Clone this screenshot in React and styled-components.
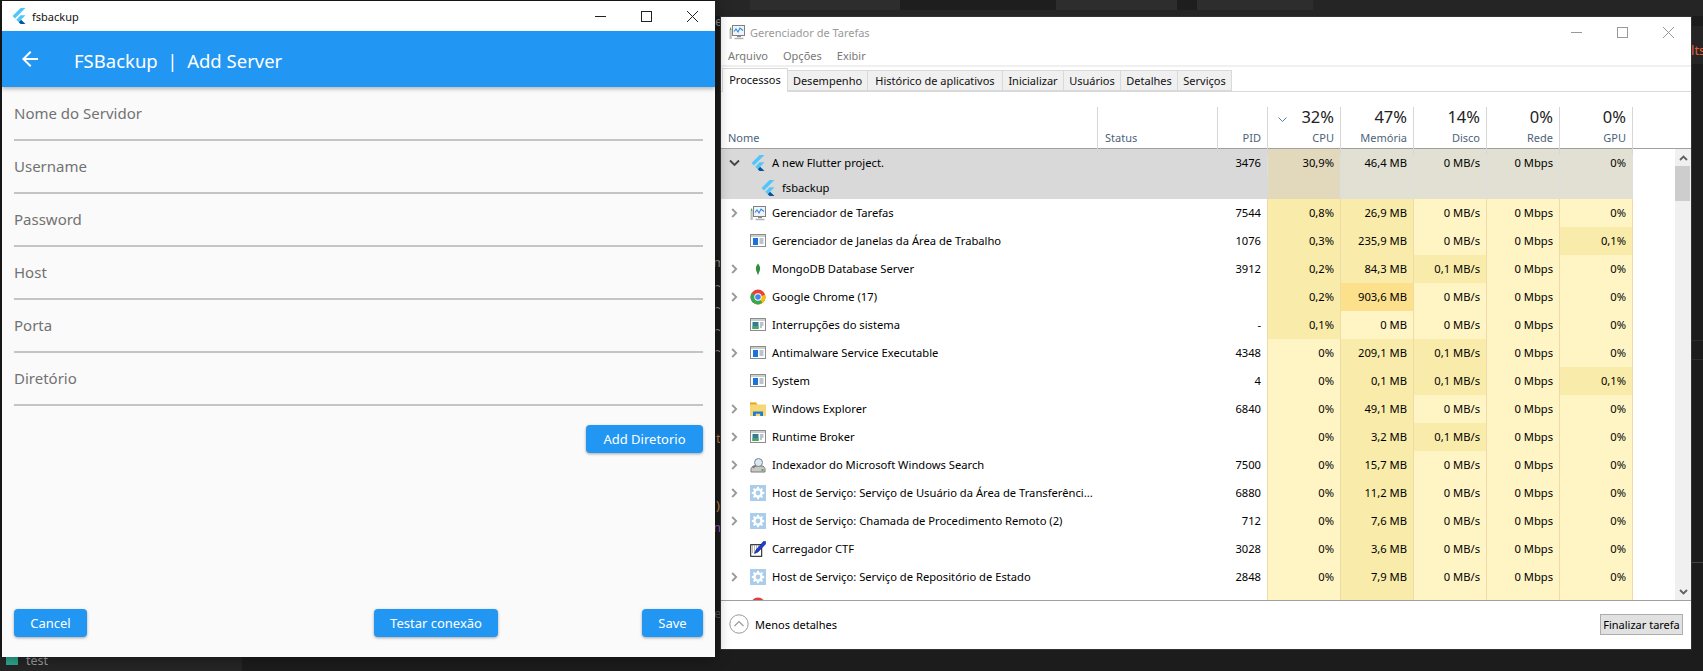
import React from 'react';
import styled, { createGlobalStyle } from 'styled-components';

const GRID = '377px 120px 50px repeat(5, 73px) 42px';
const UI_FONT = '"Noto Sans", "Open Sans", Roboto, sans-serif';

const Global = createGlobalStyle`
  html, body { margin: 0; padding: 0; height: 100%; background: #1c1c1c; overflow: hidden; }
  * { box-sizing: border-box; }
  body { font-family: ${UI_FONT}; }
`;

const Desktop = styled.div`
  position: relative;
  width: 1703px;
  height: 671px;
  overflow: hidden;
  background: #1c1c1c;
`;

/* editor peeking out behind the two windows */
const EditorTabs = styled.div`
  position: absolute;
  top: 0;
  left: 715px;
  right: 0;
  height: 16px;
  display: flex;
  background: #252526;
`;
const EditorTab = styled.div`
  height: 10px;
  width: ${(p) => p.$w}px;
  background: ${(p) => p.$bg};
`;
const Sidebar = styled.div`
  position: absolute;
  left: 0;
  bottom: 0;
  width: 242px;
  height: 14px;
  background: #252526;
  display: flex;
  align-items: flex-start;
  padding-left: 6px;
  overflow: hidden;
`;
const TestMark = styled.span`
  width: 12px;
  height: 8px;
  background: #2aa58c;
`;
const TestLabel = styled.span`
  margin: -5px 0 0 8px;
  font-size: 12.5px;
  color: #9a9a9a;
`;
const Fragment = styled.span`
  position: absolute;
  left: ${(p) => p.$x}px;
  top: ${(p) => p.$y}px;
  color: ${(p) => p.$c};
  font: 13px "Noto Sans", sans-serif;
  line-height: 14px;
`;
const EdgeBand = styled.div`
  position: absolute;
  left: 1691px;
  right: 0;
  top: ${(p) => p.$y}px;
  height: ${(p) => p.$h}px;
  background: ${(p) => p.$c};
`;

/* flutter app window */
const AppWindow = styled.div`
  position: absolute;
  left: 2px;
  top: 1px;
  width: 713px;
  height: 656px;
  z-index: 2;
  display: flex;
  flex-direction: column;
  background: #fafafa;
  box-shadow: 0 0 14px rgba(0, 0, 0, 0.45);
`;
const AppTitleBar = styled.div`
  height: 30px;
  flex: none;
  display: flex;
  align-items: center;
  background: #fff;
  padding-left: 10px;
`;
const AppTitle = styled.span`
  margin-left: 6px;
  font-size: 11px;
  color: #111;
`;
const Controls = styled.div`
  margin-left: auto;
  align-self: flex-start;
  display: flex;
  color: ${(p) => (p.$dim ? '#999' : '#222')};
`;
const ControlButton = styled.span`
  width: 46px;
  height: 30px;
  display: flex;
  align-items: center;
  justify-content: center;
`;
const AppBar = styled.header`
  height: 56px;
  flex: none;
  display: flex;
  align-items: center;
  gap: 32px;
  padding-left: 16px;
  background: #2196f3;
  color: #fff;
  box-shadow: 0 2px 4px rgba(0, 0, 0, 0.28);
  z-index: 1;
`;
const AppBarTitle = styled.h1`
  margin: 2px 0 0;
  font-size: 18.5px;
  font-weight: 400;
  white-space: pre;
`;
const Form = styled.div`
  flex: 1;
  display: flex;
  flex-direction: column;
  padding: 1px 12px 20px;
`;
const Field = styled.label`
  height: 53px;
  flex: none;
  display: flex;
  align-items: center;
  padding-bottom: 2px;
  font-size: 15px;
  color: #727272;
  border-bottom: 2px solid #c4c4c4;
`;
const ButtonRow = styled.div`
  display: flex;
  margin-top: ${(p) => p.$top};
`;
const Raised = styled.button`
  width: ${(p) => p.$w}px;
  margin-left: ${(p) => p.$offset || '0'};
  height: 28px;
  padding: 0;
  border: none;
  border-radius: 4px;
  background: #2196f3;
  color: #fff;
  font-family: inherit;
  font-size: 13px;
  box-shadow: 0 1px 3px rgba(0, 0, 0, 0.35);
`;

/* task manager window */
const TaskWindow = styled.div`
  position: absolute;
  left: 720px;
  top: 16px;
  width: 972px;
  height: 634px;
  display: flex;
  flex-direction: column;
  background: #fff;
  border: 1px solid #333;
  font-size: 11px;
  color: #000;
`;
const TaskTitleBar = styled.div`
  height: 29px;
  flex: none;
  display: flex;
  align-items: center;
  padding-left: 8px;
`;
const TaskTitle = styled.span`
  margin: 2px 0 0 5px;
  font-size: 11px;
  color: #999;
`;
const MenuBar = styled.div`
  height: 21px;
  flex: none;
  display: flex;
  gap: 15px;
  padding: 0 0 0 7px;
  align-items: center;
  color: #777;
  border-bottom: 2px solid #f0f0f0;
`;
const TabStrip = styled.div`
  height: 25px;
  flex: none;
  display: flex;
  align-items: flex-end;
  padding-left: 1px;
  border-bottom: 1px solid #d9d9d9;
`;
const Tab = styled.div`
  width: ${(p) => p.$w}px;
  height: ${(p) => (p.$active ? 24 : 21)}px;
  margin-bottom: ${(p) => (p.$active ? -1 : 0)}px;
  padding-bottom: ${(p) => (p.$active ? 3 : 0)}px;
  display: flex;
  align-items: center;
  justify-content: center;
  background: ${(p) => (p.$active ? '#fff' : '#f0f0f0')};
  border: 1px solid #d9d9d9;
  border-left-width: ${(p) => (p.$active ? 1 : 0)}px;
  border-bottom-width: ${(p) => (p.$active ? 0 : 1)}px;
  color: #111;
  position: relative;
`;
const HeaderRow = styled.div`
  margin-top: 15px;
  height: 42px;
  flex: none;
  display: grid;
  grid-template-columns: ${GRID} 16px;
  border-bottom: 1px solid #a0a0a0;
`;
const HeaderCell = styled.div`
  position: relative;
  display: flex;
  flex-direction: column;
  justify-content: flex-end;
  align-items: ${(p) => (p.$left ? 'flex-start' : 'flex-end')};
  padding: 0 6px 9px 7px;
  color: #4d5f7a;
  border-right: ${(p) => (p.$plain ? 'none' : '1px solid #d6d6d6')};
`;
const Percent = styled.span`
  font-size: 16.5px;
  line-height: 20px;
  margin-bottom: 3px;
  color: #222;
`;
const SortMark = styled.span`
  position: absolute;
  left: 10px;
  top: 3px;
  color: #5f7ba8;
`;
const ScrollArea = styled.div`
  flex: 1;
  min-height: 0;
  display: flex;
  border-bottom: 1px solid #a0a0a0;
`;
const Rows = styled.div`
  flex: 1;
  overflow: hidden;
  font-size: 11.2px;
`;
const Scrollbar = styled.div`
  width: 16px;
  flex: none;
  display: flex;
  flex-direction: column;
  align-items: center;
  background: #f0f0f0;
  color: #606060;
`;
const ScrollStep = styled.span`
  height: 17px;
  flex: none;
  display: flex;
  align-items: center;
  justify-content: center;
`;
const Thumb = styled.span`
  width: 15px;
  margin-left: -1px;
  height: 35px;
  flex: none;
  background: #cdcdcd;
`;
const ScrollGap = styled.span`
  flex: 1;
`;
const Group = styled.div`
  display: grid;
  grid-template-columns: 547px repeat(5, 73px) 42px;
  background: #fff;
`;
const GroupNames = styled.div`
  background: #d9d9d9;
  display: flex;
  flex-direction: column;
`;
const GroupRow = styled.div`
  display: grid;
  grid-template-columns: 377px 120px 50px;
  height: ${(p) => p.$h}px;
`;
const Row = styled.div`
  height: 28px;
  display: grid;
  grid-template-columns: ${GRID};
`;
const NameCell = styled.div`
  display: flex;
  align-items: center;
  min-width: 0;
  padding-left: ${(p) => (p.$child ? 39 : 8)}px;
  padding-bottom: 1px;
  white-space: nowrap;
`;
const ChevronSlot = styled.span`
  width: 21px;
  flex: none;
  display: flex;
  padding-left: ${(p) => (p.$open ? 0 : 2)}px;
  color: ${(p) => (p.$open ? '#444' : '#999')};
`;
const IconSlot = styled.span`
  width: 16px;
  height: 16px;
  flex: none;
  margin-right: 6px;
  display: flex;
  justify-content: center;
`;
const Cell = styled.div`
  display: flex;
  align-items: center;
  justify-content: flex-end;
  padding: 0 6px 1px 0;
  white-space: nowrap;
`;
const HeatCell = styled(Cell)`
  background: ${(p) => ['#fff4c4', '#f9ecaa', '#fde08c'][p.$level]};
  border-right: 1px solid #efdba8;
`;
const PidCell = styled(Cell)`
  border-right: 1px solid ${(p) => (p.$selected ? '#d9dfe2' : '#efdba8')};
`;
const SelectedHeat = styled(Cell)`
  align-items: flex-start;
  padding-top: 6px;
  background: ${(p) => (p.$hot ? '#e2d8bc' : '#e1e0d2')};
  border-right: 1px solid #d9dfe2;
`;
const Footer = styled.div`
  height: 48px;
  flex: none;
  display: flex;
  align-items: center;
  padding: 0 8px 2px 8px;
`;
const FewerDetails = styled.span`
  display: flex;
  align-items: center;
  gap: 6px;
`;
const EndTask = styled.button`
  margin-left: auto;
  width: 83px;
  height: 21px;
  padding: 0;
  font-family: inherit;
  font-size: 11px;
  color: #000;
  background: #e1e1e1;
  border: 1px solid #adadad;
`;

const Glyph = ({ size = 16, children, viewBox = '0 0 16 16' }) => (
  <svg width={size} height={size} viewBox={viewBox} fill="none">
    {children}
  </svg>
);

const FlutterLogo = ({ width = 14, height = 16 }) => (
  <svg width={width} height={height} viewBox="2 0 20 24">
    <polygon points="14.3,0 2.3,12 6,15.7 21.7,0" fill="#54c5f8" />
    <polygon points="14.3,11 7.9,17.5 11.6,21.2 21.7,11" fill="#54c5f8" />
    <polygon points="11.6,21.2 14.3,24 21.7,24 15.2,17.5" fill="#01579b" />
  </svg>
);

const Minimize = () => (
  <svg width="11" height="11" viewBox="0 0 11 11"><path d="M0 5.5h11" stroke="currentColor" /></svg>
);
const Maximize = () => (
  <svg width="11" height="11" viewBox="0 0 11 11"><rect x=".5" y=".5" width="10" height="10" fill="none" stroke="currentColor" /></svg>
);
const CloseX = () => (
  <svg width="11" height="11" viewBox="0 0 11 11"><path d="M0 0l11 11M11 0L0 11" stroke="currentColor" /></svg>
);
const WindowControls = ({ dim }) => (
  <Controls $dim={dim}>
    <ControlButton><Minimize /></ControlButton>
    <ControlButton><Maximize /></ControlButton>
    <ControlButton><CloseX /></ControlButton>
  </Controls>
);

const ArrowBack = () => (
  <svg width="24" height="24" viewBox="0 0 24 24">
    <path fill="currentColor" d="M20 11H7.83l5.59-5.59L12 4l-8 8 8 8 1.41-1.41L7.83 13H20v-2z" />
  </svg>
);

const Chevron = ({ open }) =>
  open ? (
    <svg width="11" height="8" viewBox="0 0 11 8"><path d="M1 1.5l4.5 4.5L10 1.5" stroke="currentColor" strokeWidth="1.9" fill="none" /></svg>
  ) : (
    <svg width="7" height="10" viewBox="0 0 7 10"><path d="M1.2 1l4 4-4 4" stroke="currentColor" strokeWidth="1.8" fill="none" /></svg>
  );

const SmallUp = () => (
  <svg width="9" height="6" viewBox="0 0 9 6"><path d="M1 5l3.5-3.5L8 5" stroke="currentColor" strokeWidth="1.8" fill="none" /></svg>
);
const SmallDown = () => (
  <svg width="9" height="6" viewBox="0 0 9 6"><path d="M1 1l3.5 3.5L8 1" stroke="currentColor" strokeWidth="1.8" fill="none" /></svg>
);

const TaskIcon = () => (
  <Glyph>
    <rect x="3.5" y="1.5" width="12" height="10" fill="#eef4fa" stroke="#808080" />
    <path d="M5 7.5l2-2.5 2 3 2-4 3 2.5" stroke="#2f8ae0" strokeWidth="1.1" />
    <path d="M8 12.5h4" stroke="#8a8a8a" strokeWidth="1.4" />
    <path d="M5.5 14.5h9" stroke="#b0b0b0" strokeWidth="1.4" />
    <rect x=".5" y="5" width="2.2" height="10" fill="#bdbdbd" />
    <rect x="1" y="3.5" width="1.2" height="2.5" fill="#4fb04f" />
  </Glyph>
);
const ProcessIcon = () => (
  <Glyph>
    <rect x=".5" y="1.5" width="15" height="12" fill="#fff" stroke="#8c8c8c" />
    <rect x="1" y="2" width="14" height="2" fill="#c9ced3" />
    <rect x="3" y="5" width="5" height="7" fill="#1a73d9" />
    <path d="M9.5 6h4M9.5 8h4M9.5 10h4" stroke="#7d8790" />
  </Glyph>
);
const InterruptIcon = () => (
  <Glyph>
    <rect x=".5" y="1.5" width="15" height="12" fill="#fff" stroke="#8c8c8c" />
    <rect x="1" y="2" width="14" height="2" fill="#c9ced3" />
    <rect x="2.5" y="5" width="6" height="7" fill="#2f7f8f" />
    <rect x="2.5" y="9" width="6" height="3" fill="#4da36a" />
    <path d="M10 6h3.5M10 8h3.5M10 10h2" stroke="#7d8790" />
  </Glyph>
);
const LeafIcon = () => (
  <Glyph>
    <path d="M8 2.5C9.6 4.5 10.2 6 10.1 8 9.9 10 8.8 11.4 8.4 13.5h-.8C7.2 11.4 6.1 10 5.9 8 5.8 6 6.4 4.5 8 2.5z" fill="#2f8f3a" />
  </Glyph>
);
const ChromeIcon = () => (
  <Glyph>
    <circle cx="8" cy="8" r="7.5" fill="#ea4335" />
    <path d="M8 8L1.5 4.2A7.5 7.5 0 0 0 4.3 14.5z" fill="#34a853" />
    <path d="M8 8l7.2-2.2A7.5 7.5 0 0 1 4.3 14.5z" fill="#fbbc05" />
    <path d="M8 8l-3.7 6.5a7.5 7.5 0 0 0 7.9-1.1z" fill="#34a853" />
    <circle cx="8" cy="8" r="3.7" fill="#fff" />
    <circle cx="8" cy="8" r="2.8" fill="#4285f4" />
  </Glyph>
);
const FolderIcon = () => (
  <Glyph>
    <path d="M0 1.5h6l1.5 2H16V15H0z" fill="#f7d774" />
    <path d="M0 1.5h6l1.5 2H0z" fill="#e5a82e" />
    <path d="M3 15v-4.5h10V15h-2.8v-2.3H5.8V15z" fill="#1a7fd4" />
  </Glyph>
);
const SearchIcon = () => (
  <Glyph>
    <path d="M1 11.5L3 9h10l2 2.5V15H1z" fill="#c8c8c8" stroke="#7a7a7a" />
    <rect x="11.5" y="12" width="2" height="2" fill="#55b04a" />
    <circle cx="8.5" cy="5.5" r="4" fill="#d9e8f4" stroke="#808080" />
    <path d="M5.5 8.5L3 11" stroke="#707070" strokeWidth="1.5" />
  </Glyph>
);
const ServiceIcon = () => (
  <Glyph>
    <rect width="16" height="16" fill="#a9cdea" />
    <circle cx="8" cy="8" r="3.6" fill="none" stroke="#fff" strokeWidth="2.4" />
    <path d="M8 1.8v2.4M8 11.8v2.4M1.8 8h2.4M11.8 8h2.4M3.6 3.6l1.7 1.7M10.7 10.7l1.7 1.7M3.6 12.4l1.7-1.7M10.7 5.3l1.7-1.7" stroke="#fff" strokeWidth="2" />
  </Glyph>
);
const PenIcon = () => (
  <Glyph>
    <rect x=".7" y="3.7" width="11" height="11.6" fill="#fff" stroke="#111" />
    <path d="M2 5h7M2 7h6M2 9h5M2 11h3" stroke="#777" strokeDasharray="1 1" />
    <path d="M15.5.5l-2 0L6 9l-1.5 3.5L8 11l7.5-8z" fill="#1b3fd6" stroke="#0a1a6a" strokeWidth=".6" />
  </Glyph>
);
const RedDotIcon = () => (
  <Glyph>
    <circle cx="8" cy="8" r="7.5" fill="#e0403a" />
  </Glyph>
);
const CollapseCircle = () => (
  <svg width="20" height="20" viewBox="0 0 20 20" fill="none">
    <circle cx="10" cy="10" r="9.2" stroke="#9a9a9a" />
    <path d="M5.5 12L10 7.5l4.5 4.5" stroke="#9a9a9a" strokeWidth="1.2" />
  </svg>
);

const TABS = [
  ['Processos', 66, true],
  ['Desempenho', 80],
  ['Histórico de aplicativos', 135],
  ['Inicializar', 61],
  ['Usuários', 57],
  ['Detalhes', 57],
  ['Serviços', 54],
];

const COLUMNS = [
  ['32%', 'CPU'],
  ['47%', 'Memória'],
  ['14%', 'Disco'],
  ['0%', 'Rede'],
  ['0%', 'GPU'],
];

const PROCESSES = [
  { icon: TaskIcon, more: 1, name: 'Gerenciador de Tarefas', pid: '7544', cpu: '0,8%', mem: '26,9 MB', disk: '0 MB/s', gpu: '0%', heat: [1, 1, 0, 0] },
  { icon: ProcessIcon, name: 'Gerenciador de Janelas da Área de Trabalho', pid: '1076', cpu: '0,3%', mem: '235,9 MB', disk: '0 MB/s', gpu: '0,1%', heat: [1, 1, 0, 1] },
  { icon: LeafIcon, more: 1, name: 'MongoDB Database Server', pid: '3912', cpu: '0,2%', mem: '84,3 MB', disk: '0,1 MB/s', gpu: '0%', heat: [1, 1, 1, 0] },
  { icon: ChromeIcon, more: 1, name: 'Google Chrome (17)', pid: '', cpu: '0,2%', mem: '903,6 MB', disk: '0 MB/s', gpu: '0%', heat: [1, 2, 0, 0] },
  { icon: InterruptIcon, name: 'Interrupções do sistema', pid: '-', cpu: '0,1%', mem: '0 MB', disk: '0 MB/s', gpu: '0%', heat: [1, 0, 0, 0] },
  { icon: ProcessIcon, more: 1, name: 'Antimalware Service Executable', pid: '4348', cpu: '0%', mem: '209,1 MB', disk: '0,1 MB/s', gpu: '0%', heat: [0, 1, 1, 0] },
  { icon: ProcessIcon, name: 'System', pid: '4', cpu: '0%', mem: '0,1 MB', disk: '0,1 MB/s', gpu: '0,1%', heat: [0, 1, 1, 1] },
  { icon: FolderIcon, more: 1, name: 'Windows Explorer', pid: '6840', cpu: '0%', mem: '49,1 MB', disk: '0 MB/s', gpu: '0%', heat: [0, 1, 0, 0] },
  { icon: InterruptIcon, more: 1, name: 'Runtime Broker', pid: '', cpu: '0%', mem: '3,2 MB', disk: '0,1 MB/s', gpu: '0%', heat: [0, 1, 1, 0] },
  { icon: SearchIcon, more: 1, name: 'Indexador do Microsoft Windows Search', pid: '7500', cpu: '0%', mem: '15,7 MB', disk: '0 MB/s', gpu: '0%', heat: [0, 1, 0, 0] },
  { icon: ServiceIcon, more: 1, name: 'Host de Serviço: Serviço de Usuário da Área de Transferênci...', pid: '6880', cpu: '0%', mem: '11,2 MB', disk: '0 MB/s', gpu: '0%', heat: [0, 1, 0, 0] },
  { icon: ServiceIcon, more: 1, name: 'Host de Serviço: Chamada de Procedimento Remoto (2)', pid: '712', cpu: '0%', mem: '7,6 MB', disk: '0 MB/s', gpu: '0%', heat: [0, 1, 0, 0] },
  { icon: PenIcon, name: 'Carregador CTF', pid: '3028', cpu: '0%', mem: '3,6 MB', disk: '0 MB/s', gpu: '0%', heat: [0, 1, 0, 0] },
  { icon: ServiceIcon, more: 1, name: 'Host de Serviço: Serviço de Repositório de Estado', pid: '2848', cpu: '0%', mem: '7,9 MB', disk: '0 MB/s', gpu: '0%', heat: [0, 1, 0, 0] },
];

const FRAGMENTS = [
  ['m', 713, 255, '#8a8a8a'],
  ['~', 715, 279, '#b08a7a'],
  ['~', 715, 301, '#b08a7a'],
  ['~', 715, 323, '#b08a7a'],
  ['~', 715, 344, '#b08a7a'],
  ['t', 716, 431, '#b07a4a'],
  [')', 716, 498, '#c58a4a'],
  ['n', 713, 520, '#9a5fc0'],
  ['e', 714, 606, '#555'],
  ['e', 715, 14, '#8a8a8a'],
  ['ults', 1683, 43, '#e0603a'],
];

const ProcessRow = ({ process }) => {
  const Icon = process.icon;
  return (
    <Row>
      <NameCell>
        <ChevronSlot>{process.more ? <Chevron /> : null}</ChevronSlot>
        <IconSlot><Icon /></IconSlot>
        {process.name}
      </NameCell>
      <Cell />
      <PidCell>{process.pid}</PidCell>
      <HeatCell $level={process.heat[0]}>{process.cpu}</HeatCell>
      <HeatCell $level={process.heat[1]}>{process.mem}</HeatCell>
      <HeatCell $level={process.heat[2]}>{process.disk}</HeatCell>
      <HeatCell $level={0}>0 Mbps</HeatCell>
      <HeatCell $level={process.heat[3]}>{process.gpu}</HeatCell>
    </Row>
  );
};

export default function App() {
  return (
    <Desktop>
      <Global />
      <EditorTabs>
        <EditorTab $w={35} $bg="#262626" />
        <EditorTab $w={150} $bg="#2d2d2d" />
        <EditorTab $w={156} $bg="#1e1e1e" />
        <EditorTab $w={121} $bg="#2d2d2d" />
        <EditorTab $w={20} $bg="#1e1e1e" />
        <EditorTab $w={116} $bg="#2d2d2d" />
      </EditorTabs>
      <EdgeBand $y={26} $h={38} $c="#252526" />
      <EdgeBand $y={340} $h={1} $c="#2c2c2c" />
      <EdgeBand $y={359} $h={1} $c="#2c2c2c" />
      <EdgeBand $y={562} $h={1} $c="#444" />
      <Sidebar>
        <TestMark />
        <TestLabel>test</TestLabel>
      </Sidebar>
      {FRAGMENTS.map(([text, x, y, color], i) => (
        <Fragment key={i} $x={x} $y={y} $c={color}>{text}</Fragment>
      ))}

      <AppWindow>
        <AppTitleBar>
          <FlutterLogo />
          <AppTitle>fsbackup</AppTitle>
          <WindowControls />
        </AppTitleBar>
        <AppBar>
          <ArrowBack />
          <AppBarTitle>FSBackup  |  Add Server</AppBarTitle>
        </AppBar>
        <Form>
          {['Nome do Servidor', 'Username', 'Password', 'Host', 'Porta', 'Diretório'].map((label) => (
            <Field key={label}>{label}</Field>
          ))}
          <ButtonRow $top="19px">
            <Raised $w={117} $offset="auto">Add Diretorio</Raised>
          </ButtonRow>
          <ButtonRow $top="156px">
            <Raised $w={73}>Cancel</Raised>
            <Raised $w={124} $offset="287px">Testar conexão</Raised>
            <Raised $w={61} $offset="auto">Save</Raised>
          </ButtonRow>
        </Form>
      </AppWindow>

      <TaskWindow>
        <TaskTitleBar>
          <TaskIcon />
          <TaskTitle>Gerenciador de Tarefas</TaskTitle>
          <WindowControls dim />
        </TaskTitleBar>
        <MenuBar>
          <span>Arquivo</span>
          <span>Opções</span>
          <span>Exibir</span>
        </MenuBar>
        <TabStrip>
          {TABS.map(([label, width, active]) => (
            <Tab key={label} $w={width} $active={active}>{label}</Tab>
          ))}
        </TabStrip>
        <HeaderRow>
          <HeaderCell $left>Nome</HeaderCell>
          <HeaderCell $left>Status</HeaderCell>
          <HeaderCell>PID</HeaderCell>
          {COLUMNS.map(([percent, label], i) => (
            <HeaderCell key={label}>
              {i === 0 && (
                <SortMark>
                  <svg width="9" height="5" viewBox="0 0 9 5"><path d="M.5.5l4 4 4-4" stroke="currentColor" fill="none" /></svg>
                </SortMark>
              )}
              <Percent>{percent}</Percent>
              {label}
            </HeaderCell>
          ))}
          <HeaderCell $plain />
          <HeaderCell $plain />
        </HeaderRow>
        <ScrollArea>
          <Rows>
            <Group>
              <GroupNames>
                <GroupRow $h={28}>
                  <NameCell>
                    <ChevronSlot $open><Chevron open /></ChevronSlot>
                    <IconSlot><FlutterLogo /></IconSlot>
                    A new Flutter project.
                  </NameCell>
                  <Cell />
                  <PidCell $selected>3476</PidCell>
                </GroupRow>
                <GroupRow $h={22}>
                  <NameCell $child>
                    <IconSlot><FlutterLogo /></IconSlot>
                    fsbackup
                  </NameCell>
                </GroupRow>
              </GroupNames>
              <SelectedHeat $hot>30,9%</SelectedHeat>
              <SelectedHeat>46,4 MB</SelectedHeat>
              <SelectedHeat>0 MB/s</SelectedHeat>
              <SelectedHeat>0 Mbps</SelectedHeat>
              <SelectedHeat>0%</SelectedHeat>
            </Group>
            {PROCESSES.map((process) => (
              <ProcessRow key={process.name} process={process} />
            ))}
            <Row>
              <NameCell>
                <ChevronSlot />
                <IconSlot><RedDotIcon /></IconSlot>
              </NameCell>
              <Cell />
              <PidCell />
              <HeatCell $level={0} />
              <HeatCell $level={1} />
              <HeatCell $level={0} />
              <HeatCell $level={0} />
              <HeatCell $level={0} />
            </Row>
          </Rows>
          <Scrollbar>
            <ScrollStep><SmallUp /></ScrollStep>
            <Thumb />
            <ScrollGap />
            <ScrollStep><SmallDown /></ScrollStep>
          </Scrollbar>
        </ScrollArea>
        <Footer>
          <FewerDetails>
            <CollapseCircle />
            Menos detalhes
          </FewerDetails>
          <EndTask>Finalizar tarefa</EndTask>
        </Footer>
      </TaskWindow>
    </Desktop>
  );
}
